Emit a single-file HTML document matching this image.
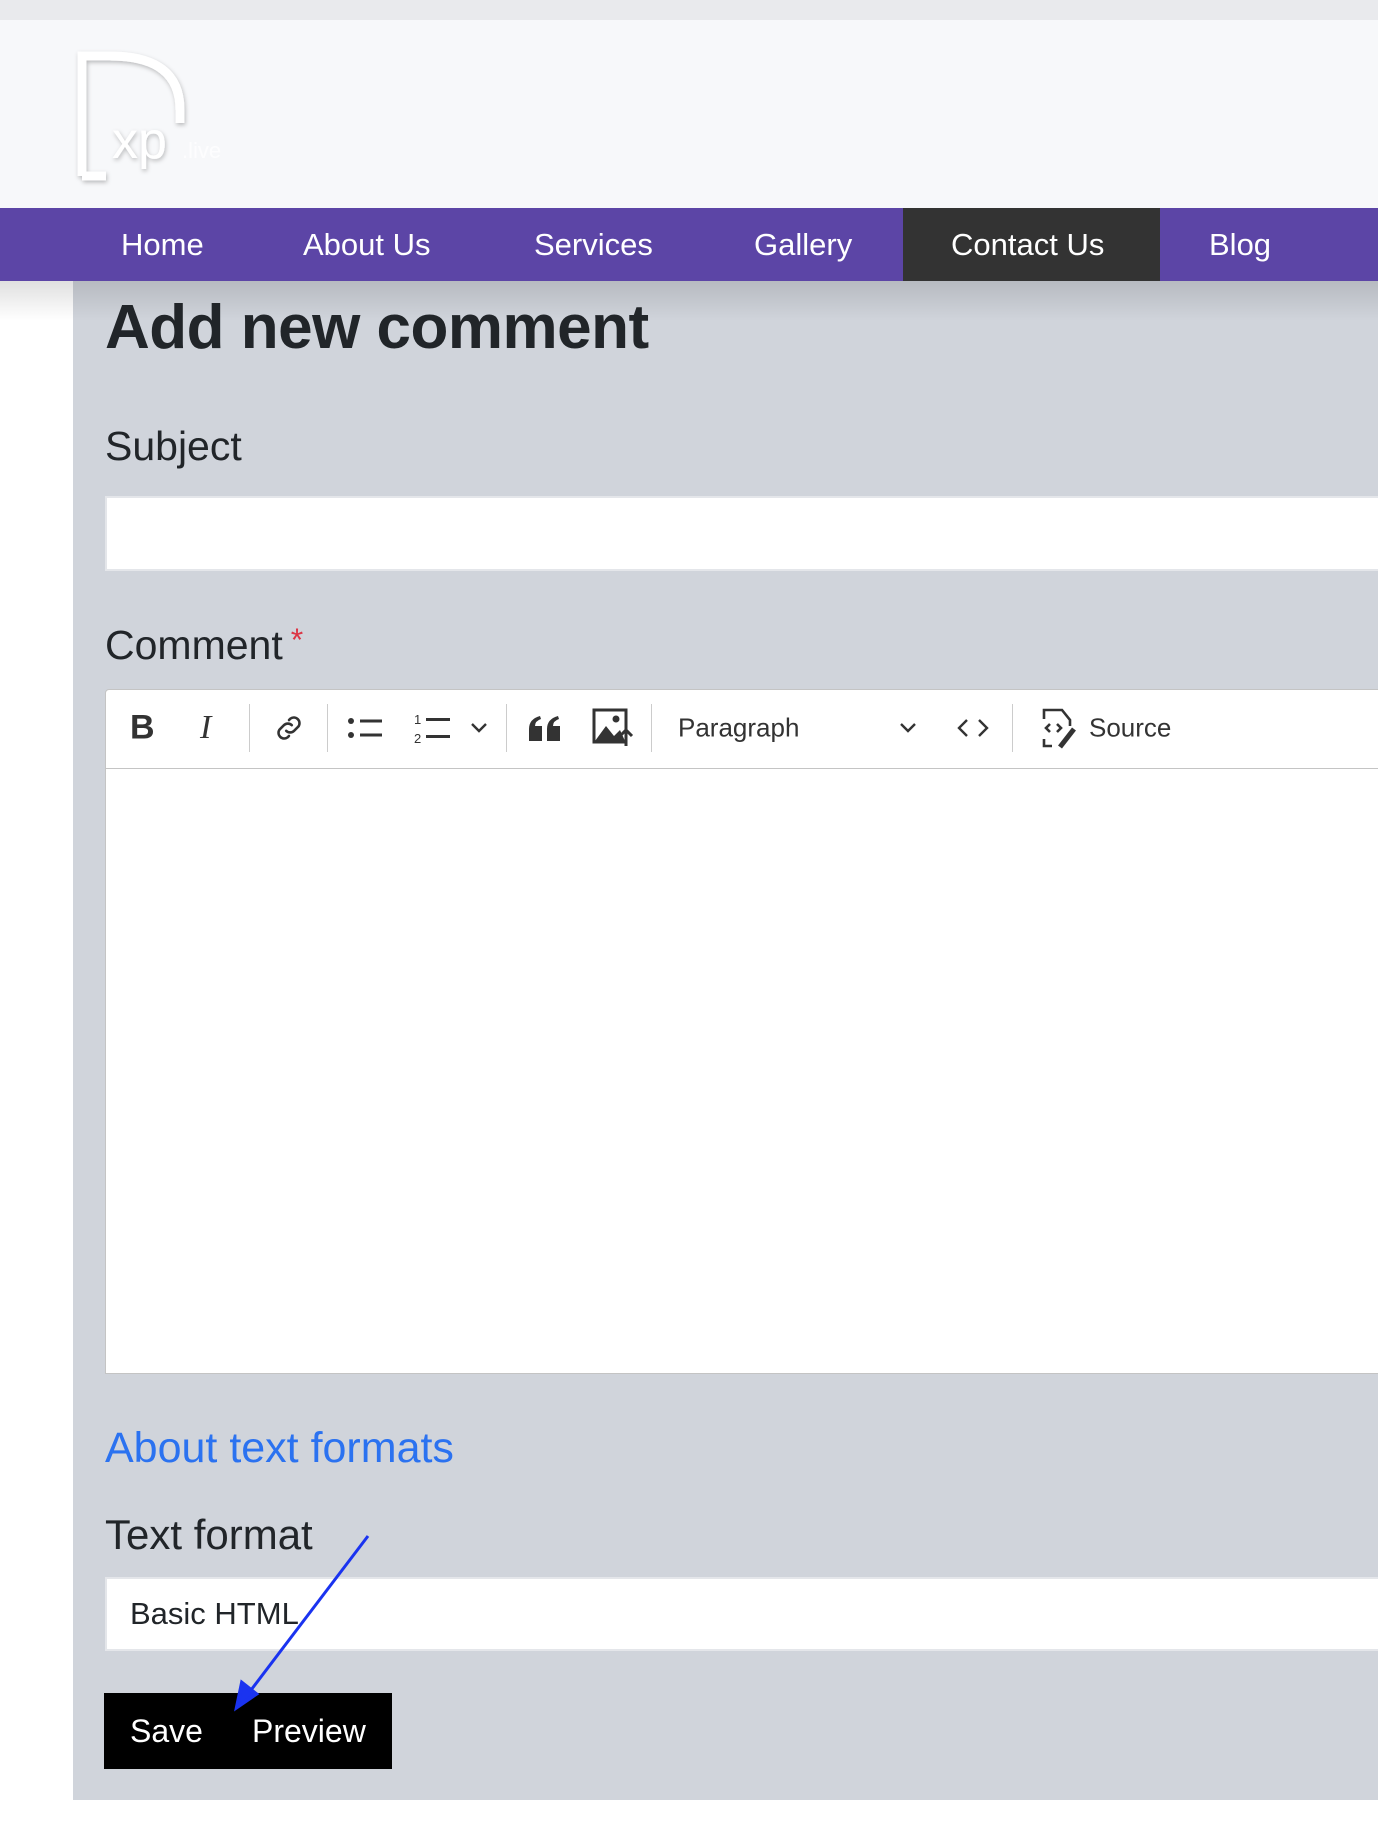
<!DOCTYPE html>
<html><head><meta charset="utf-8"><style>
*{margin:0;padding:0;box-sizing:border-box}
body{width:1378px;height:1836px;background:#fff;font-family:"Liberation Sans",Arial,sans-serif;position:relative;overflow:hidden;color:#212529}
.abs{position:absolute}
#top{left:0;top:0;width:1378px;height:20px;background:#e9eaed}
#hdr{left:0;top:20px;width:1378px;height:188px;background:#f7f8fa}
#nav{left:0;top:208px;width:1378px;height:73px;background:#5c45a6}
.ni{position:absolute;top:0;height:73px;line-height:73px;color:#fff;font-size:31px}
#panel{left:73px;top:281px;width:1305px;height:1519px;background:#d0d4db}
#shade{left:0;top:281px;width:1378px;height:40px;background:linear-gradient(rgba(0,0,0,0.12),rgba(0,0,0,0))}
h1{position:absolute;left:105px;top:292px;font-size:62px;font-weight:bold;letter-spacing:-0.5px;color:#212529}
.lbl{position:absolute;left:105px;font-size:41px;color:#212529}
.inp{position:absolute;left:105px;width:1280px;background:#fff;border:2px solid #e4e6ea}
.tb{position:absolute;top:728px;transform:translateY(-50%);color:#333}
.sep{position:absolute;top:704px;width:1px;height:48px;background:#ccc}
</style></head><body>
<div id="top" class="abs"></div>
<div id="hdr" class="abs">
<svg class="abs" style="left:70px;top:20px" width="180" height="150" viewBox="0 0 180 150">
<defs><filter id="sh"><feDropShadow dx="1" dy="2" stdDeviation="2" flood-color="#000" flood-opacity="0.25"/></filter></defs>
<g filter="url(#sh)" fill="none" stroke="#fff">
<path d="M12 136 L12 16 L40 16 Q110 16 110 70 L110 83" stroke-width="9"/>
<path d="M12 136 L36 136" stroke-width="9"/>
</g>
<text x="42" y="118" font-family="Liberation Sans" font-size="52" fill="#fff" filter="url(#sh)">xp</text>
<text x="112" y="118" font-family="Liberation Sans" font-size="22" fill="#fff" opacity="0.85">.live</text>
</svg>
</div>
<div id="nav" class="abs">
<div class="ni" style="left:121px">Home</div>
<div class="ni" style="left:303px">About Us</div>
<div class="ni" style="left:534px">Services</div>
<div class="ni" style="left:754px">Gallery</div>
<div class="ni" style="left:903px;width:257px;background:#333;padding-left:48px">Contact Us</div>
<div class="ni" style="left:1209px">Blog</div>
</div>
<div id="panel" class="abs"></div>
<div id="shade" class="abs"></div>
<h1>Add new comment</h1>
<div class="lbl" style="top:423px">Subject</div>
<div class="inp" style="top:496px;height:75px"></div>
<div class="lbl" style="top:622px">Comment<span style="color:#dc3545;font-size:32px;vertical-align:top;margin-left:8px">*</span></div>
<div class="inp" style="top:689px;height:80px;border-radius:4px 0 0 0;border-color:#c4c4c4;border-width:1px"></div>
<div class="inp" style="top:768px;height:606px;border-color:#c4c4c4;border-width:1px"></div>
<div class="tb" style="left:130px;font-size:34px;font-weight:bold">B</div>
<div class="tb" style="left:200px;font-size:34px;font-family:'Liberation Serif',serif;font-style:italic">I</div>
<div class="sep" style="left:249px"></div>
<svg class="tb" style="left:272px" width="34" height="34" viewBox="0 0 24 24" fill="none" stroke="#333" stroke-width="1.8" stroke-linecap="round"><path d="M10 14a4 4 0 0 0 5.6 0l3-3a4 4 0 0 0-5.6-5.6l-1 1"/><path d="M14 10a4 4 0 0 0-5.6 0l-3 3a4 4 0 0 0 5.6 5.6l1-1"/></svg>
<div class="sep" style="left:327px"></div>
<svg class="tb" style="left:346px" width="40" height="34" viewBox="0 0 40 34" fill="#333"><circle cx="5" cy="10" r="3"/><circle cx="5" cy="24" r="3"/><rect x="14" y="8.5" width="22" height="3"/><rect x="14" y="22.5" width="22" height="3"/></svg>
<svg class="tb" style="left:412px" width="42" height="36" viewBox="0 0 42 36" fill="#333"><text x="2" y="14" font-size="13" font-family="Liberation Sans">1</text><text x="2" y="33" font-size="13" font-family="Liberation Sans">2</text><rect x="14" y="8" width="24" height="3"/><rect x="14" y="25" width="24" height="3"/></svg>
<svg class="tb" style="left:470px" width="18" height="12" viewBox="0 0 18 12" fill="none" stroke="#333" stroke-width="2.4"><path d="M2 2l7 7 7-7"/></svg>
<div class="sep" style="left:506px"></div>
<svg class="tb" style="left:528px" width="34" height="26" viewBox="0 0 34 26" fill="#333"><path d="M1 26V14Q1 4 12 1l1 3Q7 6 7 11h7v15Z"/><path d="M19 26V14Q19 4 30 1l1 3Q25 6 25 11h7v15Z"/></svg>
<svg class="tb" style="left:592px" width="42" height="40" viewBox="0 0 42 40"><rect x="2" y="2" width="32" height="32" fill="#fff" stroke="#333" stroke-width="3"/><path d="M3 33 L14 18 L22 28 L28 22 L33 33Z" fill="#333"/><circle cx="24" cy="11" r="3.5" fill="#333"/><path d="M34 38V22M28 28l6-6 6 6" stroke="#333" stroke-width="3" fill="none"/></svg>
<div class="sep" style="left:651px"></div>
<div class="tb" style="left:678px;font-size:26px">Paragraph</div>
<svg class="tb" style="left:899px" width="18" height="12" viewBox="0 0 18 12" fill="none" stroke="#333" stroke-width="2.4"><path d="M2 2l7 7 7-7"/></svg>
<svg class="tb" style="left:956px" width="34" height="22" viewBox="0 0 34 22" fill="none" stroke="#333" stroke-width="2.4"><path d="M11 3l-8 8 8 8M23 3l8 8-8 8"/></svg>
<div class="sep" style="left:1012px"></div>
<svg class="tb" style="left:1038px" width="42" height="42" viewBox="0 0 42 42" fill="none" stroke="#333" stroke-width="2.6"><path d="M6 12V3h18l8 10v6"/><path d="M6 32v7h8"/><path d="M12 17l-4 4 4 4M19 17l4 4-4 4"/><path d="M36 22l-14 18" stroke-width="5"/></svg>
<div class="tb" style="left:1089px;font-size:26px">Source</div>
<div class="lbl" style="top:1424px;color:#2b72f0;font-size:43px">About text formats</div>
<div class="lbl" style="top:1511px;font-size:42px">Text format</div>
<div class="inp" style="top:1577px;height:74px"></div>
<div class="abs" style="left:130px;top:1596px;font-size:31px;color:#212529">Basic HTML</div>
<div class="abs" style="left:104px;top:1693px;width:288px;height:76px;background:#000"></div>
<div class="abs" style="left:130px;top:1713px;font-size:32px;color:#fff">Save</div>
<div class="abs" style="left:252px;top:1713px;font-size:32px;color:#fff">Preview</div>
<svg class="abs" style="left:0;top:0" width="1378" height="1836" viewBox="0 0 1378 1836"><path d="M368 1536 L248 1694" stroke="#1a33f0" stroke-width="3"/><path d="M237 1707 L242 1683 L256 1694 Z" fill="#1a33f0" stroke="#1a33f0" stroke-width="4"/></svg>
</body></html>
